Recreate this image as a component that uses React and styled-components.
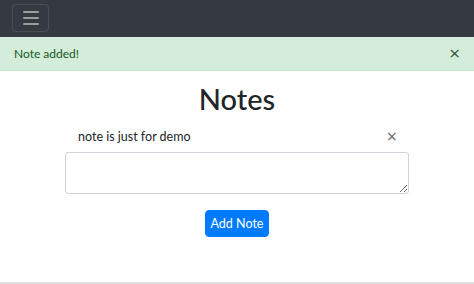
import React from "react";
import styled, { createGlobalStyle } from "styled-components";

const GlobalStyle = createGlobalStyle`
  html, body {
    margin: 0;
    padding: 0;
    background: #fff;
    font-family: Lato, "Open Sans", sans-serif;
    color: #212529;
  }
`;

const App = () => {
  return (
    <>
      <GlobalStyle />
      <Page>
        <Navbar>
          <Toggler aria-label="menu">
            <Bar />
            <Bar />
            <Bar />
          </Toggler>
        </Navbar>
        <Alert>
          <span>Note added!</span>
          <CloseButton>&times;</CloseButton>
        </Alert>
        <Main>
          <Title>Notes</Title>
          <NoteList>
            <NoteItem>
              <NoteText>note is just for demo</NoteText>
              <DeleteButton>&times;</DeleteButton>
            </NoteItem>
          </NoteList>
          <TextArea />
          <AddButton>Add Note</AddButton>
        </Main>
        <BottomBar />
      </Page>
    </>
  );
};

const Page = styled.div`
  height: 284px;
  display: flex;
  flex-direction: column;
  overflow: hidden;
`;
const Navbar = styled.nav`
  height: 37px;
  background: #343a40;
  display: flex;
  align-items: flex-start;
  padding: 4px 0 0 12px;
  box-sizing: border-box;
`;
const Toggler = styled.button`
  width: 37px;
  height: 28px;
  box-sizing: border-box;
  background: transparent;
  border: 1px solid rgba(255, 255, 255, 0.1);
  border-radius: 4px;
  display: flex;
  flex-direction: column;
  align-items: center;
  justify-content: center;
  gap: 4px;
  padding: 0;
`;
const Bar = styled.span`
  display: block;
  width: 16px;
  height: 2px;
  background: rgba(255, 255, 255, 0.5);
  border-radius: 1px;
`;
const Alert = styled.div`
  height: 34px;
  background: #d4edda;
  border-bottom: 1px solid #c3e6cb;
  color: #155724;
  display: flex;
  align-items: center;
  justify-content: space-between;
  padding: 0 14px;
  box-sizing: border-box;
  font-size: 12px;
`;
const CloseButton = styled.button`
  background: none;
  border: none;
  padding: 0;
  font-size: 19px;
  line-height: 1;
  color: #0b2e13;
  opacity: 0.8;
  font-family: "Open Sans", sans-serif;
`;
const Main = styled.main`
  display: flex;
  flex-direction: column;
  align-items: center;
  padding-top: 10px;
`;
const Title = styled.h1`
  margin: 0;
  font-size: 29px;
  font-weight: 500;
  line-height: 36px;
  color: #212529;
`;
const NoteList = styled.ul`
  list-style: none;
  margin: 6px 0 0;
  padding: 0;
  width: 344px;
`;
const NoteItem = styled.li`
  display: flex;
  align-items: center;
  justify-content: space-between;
  padding: 0 12px 0 13px;
  height: 26px;
`;
const NoteText = styled.span`
  font-size: 12.5px;
  color: #212529;
`;
const DeleteButton = styled.button`
  background: none;
  border: none;
  padding: 0;
  font-size: 18px;
  line-height: 1;
  color: #000;
  opacity: 0.6;
  font-family: "Open Sans", sans-serif;
`;
const TextArea = styled.textarea`
  margin-top: 3px;
  width: 344px;
  height: 42px;
  box-sizing: border-box;
  border: 1px solid #ced4da;
  border-radius: 3px;
  font-family: inherit;
  resize: vertical;
`;
const AddButton = styled.button`
  margin-top: 16px;
  height: 27px;
  width: 64px;
  padding: 0;
  background: #007bff;
  color: #fff;
  border: 1px solid #007bff;
  border-radius: 4px;
  font-family: inherit;
  font-size: 12.5px;
`;
const BottomBar = styled.div`
  margin-top: auto;
  height: 2px;
  background: #e0e0e0;
`;

export default App;
